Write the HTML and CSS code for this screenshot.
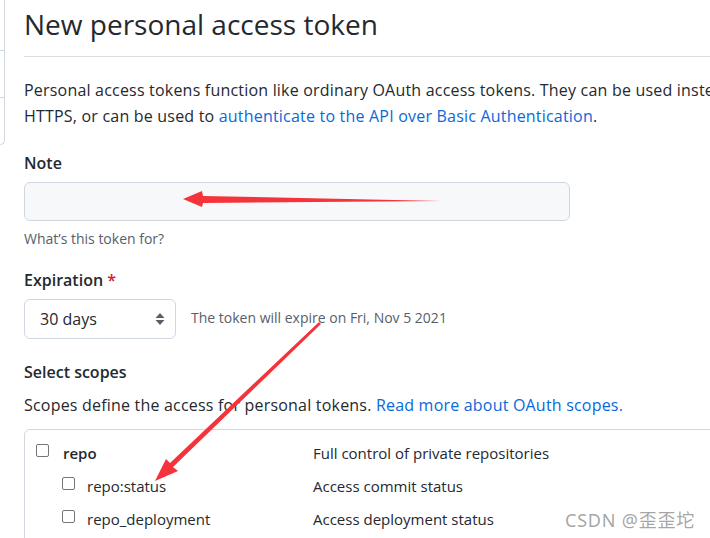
FILE: index.html
```html
<!DOCTYPE html>
<html lang="en">
<head>
  <meta charset="UTF-8">
  <meta name="viewport" content="width=device-width, initial-scale=1.0">
  <title>New personal access token</title>
  <link rel="stylesheet" href="styles.css">
</head>
<body>

  <div class="layout">
    <div class="sidebar">
      <div class="side-item first"></div>
      <div class="side-item"></div>
      <div class="side-item last"></div>
    </div>

    <div class="main">
      <h2 class="page-title">New personal access token</h2>

      <p class="intro">
        Personal access tokens function like ordinary OAuth access tokens. They can be used inste<br>
        HTTPS, or can be used to <a href="#">authenticate to the API over Basic Authentication</a>.
      </p>

      <div class="field">
        <label class="field-label" for="note">Note</label>
        <input type="text" id="note" class="note-input">
        <p class="hint">What’s this token for?</p>
      </div>

      <div class="field expire-field">
        <label class="field-label" for="expiration">Expiration <span class="required">*</span></label>
        <div class="expire-row">
          <div class="select-box">
            <span>30 days</span>
            <svg class="select-arrows" width="10" height="14" viewBox="0 0 10 14">
              <path d="M5 1 L9.5 6 L0.5 6 Z" fill="#57606a"/>
              <path d="M5 13 L9.5 8 L0.5 8 Z" fill="#57606a"/>
            </svg>
          </div>
          <span class="expire-note">The token will expire on Fri, Nov 5 2021</span>
        </div>
      </div>

      <h3 class="section-title">Select scopes</h3>
      <p class="scopes-desc">Scopes define the access for personal tokens. <a href="#">Read more about OAuth scopes.</a></p>

      <div class="scopes">
        <div class="scope-row parent">
          <label class="scope-name"><span class="checkbox"></span>repo</label>
          <span class="scope-desc">Full control of private repositories</span>
        </div>
        <div class="scope-row child">
          <label class="scope-name"><span class="checkbox"></span>repo:status</label>
          <span class="scope-desc">Access commit status</span>
        </div>
        <div class="scope-row child">
          <label class="scope-name"><span class="checkbox"></span>repo_deployment</label>
          <span class="scope-desc">Access deployment status</span>
        </div>
      </div>
    </div>
  </div>

  <!-- red annotation arrows drawn over the screenshot -->
  <svg class="annotations" width="710" height="538" viewBox="0 0 710 538">
    <polygon points="441,201 203,196 202,191 183,199 202,207 203,203" fill="#f5333a"/>
    <polygon points="321,324 173,467 178,471 155,481 166,459 170,463 319,322" fill="#f5333a"/>
  </svg>

  <div class="watermark">CSDN @歪歪坨</div>

</body>
</html>
```

FILE: styles.css
```css
body {
  margin: 0;
  font-family: "Open Sans", "Noto Sans", Arial, sans-serif;
  color: #24292f;
  background-color: #fff;
  width: 710px;
  height: 538px;
  overflow: hidden;
  position: relative;
}

a {
  color: #0969da;
  text-decoration: none;
}

.layout {
  display: flex;
  width: 710px;
  height: 538px;
  overflow: hidden;
}

.sidebar {
  width: 4px;
  flex: none;
  align-self: flex-start;
  border-right: 1px solid #d0d7de;
  border-bottom: 1px solid #d0d7de;
  border-bottom-right-radius: 6px;
}

.side-item {
  height: 46px;
  border-bottom: 1px solid #d0d7de;
}

.side-item.first {
  height: 50px;
}

.side-item.last {
  border-bottom: none;
}

.main {
  flex: 1;
  min-width: 0;
  margin-left: 19px;
}

.page-title {
  margin: 0;
  padding: 4px 0 11px;
  font-size: 28px;
  font-weight: 400;
  line-height: 41px;
  border-bottom: 1px solid #d8dee4;
}

.intro {
  margin: 20px 0 22px;
  font-size: 16px;
  line-height: 26px;
  white-space: nowrap;
  letter-spacing: 0.2px;
}

.field {
  margin-bottom: 19px;
}

.expire-field {
  margin-bottom: 21px;
}

.field-label {
  display: block;
  font-size: 16px;
  font-weight: 600;
  line-height: 24px;
  margin-bottom: 7px;
}

.required {
  color: #cf222e;
}

.note-input {
  display: block;
  box-sizing: border-box;
  width: 546px;
  height: 39px;
  margin: 0;
  background-color: #f6f8fa;
  border: 1px solid #d0d7de;
  border-radius: 6px;
}

.hint {
  margin: 8px 0 0;
  font-size: 14px;
  line-height: 20px;
  color: #57606a;
}

.expire-row {
  display: flex;
  align-items: center;
  gap: 15px;
}

.select-box {
  box-sizing: border-box;
  width: 152px;
  height: 40px;
  padding: 0 10px 0 15px;
  display: flex;
  align-items: center;
  justify-content: space-between;
  border: 1px solid #d0d7de;
  border-radius: 6px;
  font-size: 16px;
}

.select-arrows {
  display: block;
}

.expire-note {
  font-size: 14px;
  color: #57606a;
  margin-top: -4px;
}

.section-title {
  margin: 0;
  font-size: 16px;
  font-weight: 600;
  line-height: 24px;
}

.scopes-desc {
  margin: 8px 0 11px;
  font-size: 16px;
  line-height: 26px;
  white-space: nowrap;
  letter-spacing: 0.2px;
}

.scopes {
  width: 760px;
  border: 1px solid #d0d7de;
  border-radius: 6px;
  padding: 6px 10px 30px;
}

.scope-row {
  display: flex;
  align-items: center;
  height: 33px;
  font-size: 15px;
}

.scope-name {
  width: 278px;
  display: flex;
  align-items: center;
}

.parent .scope-name {
  font-weight: 600;
}

.child .scope-name {
  padding-left: 26px;
  width: 252px;
}

.checkbox {
  box-sizing: border-box;
  width: 13px;
  height: 13px;
  border: 1px solid #767676;
  border-radius: 2px;
  margin: -4px 14px 0 1px;
}

.child .checkbox {
  margin-right: 12px;
}

.scope-desc {
  color: #24292f;
}

.annotations {
  position: absolute;
  left: 0;
  top: 0;
  pointer-events: none;
}

.watermark {
  position: absolute;
  left: 565px;
  top: 506px;
  font-family: "Noto Sans", "Noto Sans CJK SC", sans-serif;
  font-size: 18px;
  letter-spacing: 0.8px;
  color: rgba(150, 150, 150, 0.85);
}
```
